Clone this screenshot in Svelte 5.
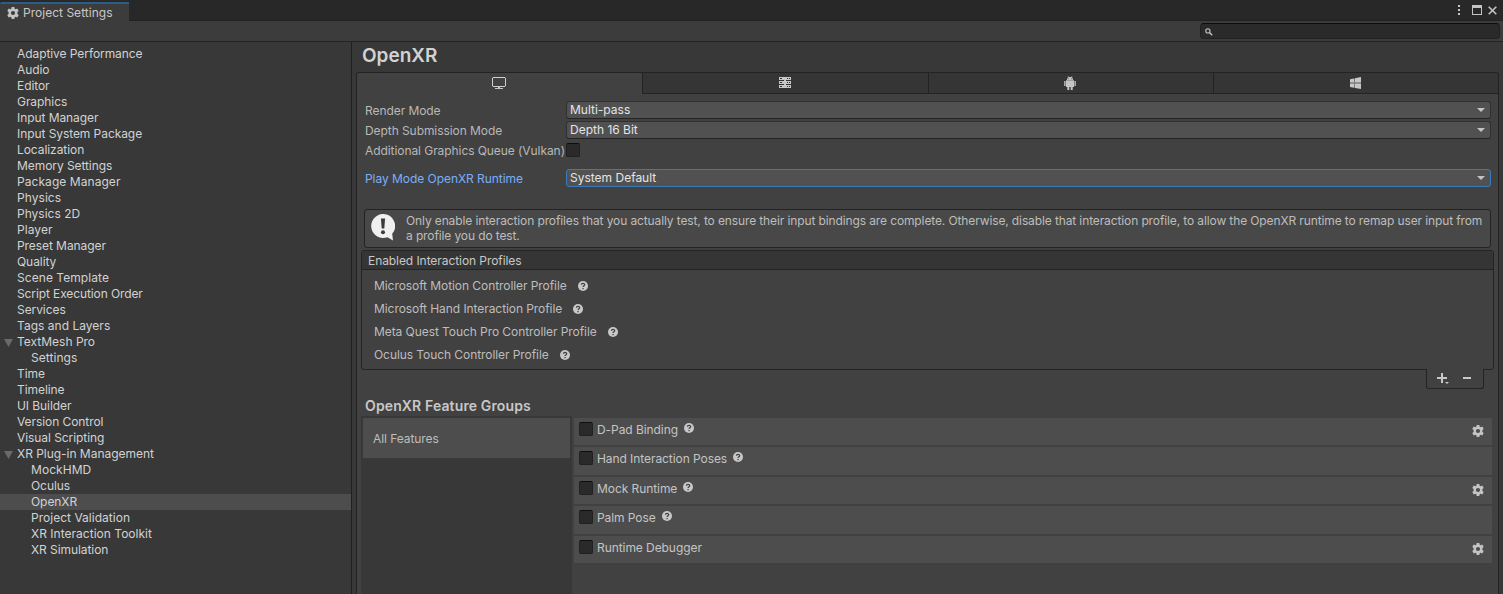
<script>
  const tree = [
    ['Adaptive Performance'], ['Audio'], ['Editor'], ['Graphics'], ['Input Manager'],
    ['Input System Package'], ['Localization'], ['Memory Settings'], ['Package Manager', '', 0.06],
    ['Physics', '', 0.06], ['Physics 2D', '', 0], ['Player', '', 0.06], ['Preset Manager'], ['Quality'],
    ['Scene Template', '', 0.06], ['Script Execution Order', '', -0.11], ['Services'], ['Tags and Layers', '', 0.02],
    ['TextMesh Pro', 'open', 0], ['Settings', 'child', 0.05], ['Time'], ['Timeline'], ['UI Builder'],
    ['Version Control'], ['Visual Scripting'], ['XR Plug-in Management', 'open', -0.03],
    ['MockHMD', 'child', 0.06], ['Oculus', 'child'], ['OpenXR', 'child'],
    ['Project Validation', 'child', 0.02], ['XR Interaction Toolkit', 'child', 0.02], ['XR Simulation', 'child']
  ];
  const profiles = [
    'Microsoft Motion Controller Profile',
    'Microsoft Hand Interaction Profile',
    'Meta Quest Touch Pro Controller Profile',
    'Oculus Touch Controller Profile'
  ];
  const features = [
    { name: 'D-Pad Binding', help: true, gear: true },
    { name: 'Hand Interaction Poses', help: true },
    { name: 'Mock Runtime', help: true, gear: true },
    { name: 'Palm Pose', help: true },
    { name: 'Runtime Debugger', gear: true }
  ];
  let selected = $state('OpenXR');
</script>

{#snippet gear(size)}
  <svg width={size} height={size} viewBox="0 0 12 12" fill="#c4c4c4">
    <path fill-rule="evenodd" d="M4.7 0h2.6l.4 1.7 .8.5 1.8-.6 1.4 2.3-1.3 1.2v1.8l1.3 1.2-1.4 2.3-1.8-.6-.8.5-.4 1.7H4.7l-.4-1.7-.8-.5-1.8.6L.3 8.1l1.3-1.2V5.1L.3 3.9l1.4-2.3 1.8.6.8-.5zM6 3.9a2.1 2.1 0 1 0 0 4.2 2.1 2.1 0 0 0 0-4.2z" />
  </svg>
{/snippet}

{#snippet help()}
  <svg class="help" width="10" height="10" viewBox="0 0 10 10">
    <circle cx="5" cy="5" r="5" fill="#c8c8c8" />
    <path d="M3.4 3.8C3.4 2 6.7 2 6.7 3.7 6.7 4.8 5.1 4.7 5.1 6.1" fill="none" stroke="#404040" stroke-width="1.25" />
    <rect x="4.4" y="7" width="1.3" height="1.2" fill="#404040" />
  </svg>
{/snippet}

{#snippet dropdown(value, focused)}
  <div class="dropdown" class:focused>
    <span>{value}</span>
    <svg width="8" height="4" viewBox="0 0 8 4"><path d="M0 0h8L4 4z" fill="#c4c4c4" /></svg>
  </div>
{/snippet}

<div class="window">
  <header class="titlebar">
    <div class="wintab">{@render gear(12)}<span>Project Settings</span></div>
    <div class="controls">
      <svg width="2" height="10" viewBox="0 0 2 10" fill="#c4c4c4"><path d="M0 0h2v2H0zM0 4h2v2H0zM0 8h2v2H0z" /></svg>
      <svg class="max" width="10" height="10" viewBox="0 0 10 10"><path fill="#c4c4c4" fill-rule="evenodd" d="M0 0h10v10H0zM1 3v6h8V3z" /></svg>
      <svg width="9" height="9" viewBox="0 0 9 9"><path d="M.7.7l7.6 7.6M8.3.7L.7 8.3" stroke="#c4c4c4" stroke-width="1.6" /></svg>
    </div>
  </header>

  <div class="toolbar">
    <div class="search">
      <svg width="8" height="8" viewBox="0 0 8 8" fill="none" stroke="#c4c4c4"><circle cx="2.9" cy="2.9" r="2.1" stroke-width="1.1" /><path d="M4.5 4.5l2.7 2.7" stroke-width="1.4" /></svg>
    </div>
  </div>

  <div class="body">
    <nav class="sidebar">
      {#each tree as [name, kind, tracking = -0.07]}
        <!-- svelte-ignore a11y_click_events_have_key_events, a11y_no_static_element_interactions -->
        <div class="item" class:child={kind === 'child'} class:selected={selected === name} onclick={() => (selected = name)}>
          {#if kind === 'open'}<svg class="fold" width="9" height="8" viewBox="0 0 9 8"><path d="M0 0h9L4.5 8z" fill="#6a6a6a" /></svg>{/if}
          <span style:letter-spacing="{tracking}px">{name}</span>
        </div>
      {/each}
    </nav>

    <main>
      <h1>OpenXR</h1>
      <section class="panel">
        <div class="tabs">
          <div class="tab active">
            <svg width="14" height="12" viewBox="0 0 14 12"><path d="M1 .5h12l.5.5v8l-.5.5H1L.5 9V1z" fill="none" stroke="#d0d0d0" /><path d="M6 9.5h2V11h3v1H3v-1h3z" fill="#c4c4c4" /></svg>
          </div>
          <div class="tab server">
            <svg width="12" height="11" viewBox="0 0 12 11" shape-rendering="crispEdges"><path d="M0 0h12v11H0z" fill="#c8c8c8" /><path d="M1 1h2v1H1zM8 1h1v1H8zM10 1h1v1h-1zM1 5h2v1H1zM8 5h1v1H8zM10 5h1v1h-1zM1 9h2v1H1zM8 9h1v1H8zM10 9h1v1h-1zM0 3h5v1H0zM7 3h5v1H7zM0 7h5v1H0zM7 7h5v1H7z" fill="#353535" /></svg>
          </div>
          <div class="tab android">
            <svg width="12" height="14" viewBox="0 0 12 14" fill="#c4c4c4"><path d="M3 4C3 2.7 3.5 1.8 4.2 1.3L3.5.2 4 0l.7 1h2.6L8 0l.5.2-.7 1.1C8.5 1.8 9 2.7 9 4z" /><path d="M2 4h8V11H8.700v3H6.700v-3H5.300v3H3.300v-3H2z" /><path d="M0 5h1.700v5H0zM10.300 5H12v5h-1.700z" opacity=".8" /><path d="M4 2.300h1v1H4zM7 2.300h1v1H7zM2 4h8v.6H2z" fill="#777" /></svg>
          </div>
          <div class="tab">
            <svg width="12" height="12" viewBox="0 0 12 12" fill="#c8c8c8"><path d="M0 2.200L4 1.500v4H0zM5 1.300L11 0v5.500H5zM0 6.500H4v4.200L0 10zM5 6.500h6V12L5 10.900z" /><path d="M0 5.500h11v1H0zM4 1.500h1v9.300H4z" opacity=".5" /></svg>
          </div>
        </div>

        <div class="fields">
          <div class="field"><label>Render Mode</label>{@render dropdown('Multi-pass', false)}</div>
          <div class="field"><label>Depth Submission Mode</label>{@render dropdown('Depth 16 Bit', false)}</div>
          <div class="field"><label>Additional Graphics Queue (Vulkan)</label><i class="check"></i></div>
          <div class="field gap"><label class="blue">Play Mode OpenXR Runtime</label>{@render dropdown('System Default', true)}</div>
        </div>

        <div class="notice">
          <svg width="24" height="27" viewBox="0 0 24 27"><path d="M12 0a12 12 0 1 0 4.500 23.200L22 26.500 21.200 19.800A12 12 0 0 0 12 0z" fill="#f0f0f0" /><path d="M9.900 4.500h4.200l-.8 10h-2.600z" fill="#3c3c3c" /><circle cx="12" cy="18.300" r="2" fill="#3c3c3c" /></svg>
          <p>Only enable interaction profiles that you actually test, to ensure their input bindings are complete. Otherwise, disable that interaction profile, to allow the OpenXR runtime to remap user input from<br />a profile you do test.</p>
        </div>

        <div class="list">
          <div class="listhead">Enabled Interaction Profiles</div>
          {#each profiles as p}
            <div class="profile"><span>{p}</span>{@render help()}</div>
          {/each}
        </div>
        <div class="listfoot">
          <svg width="13" height="12" viewBox="0 0 13 12" fill="#c8c8c8"><path d="M4 0h2v4h4v2H6v4H4V6H0V4h4zM8 9h4l-2 2z" /></svg>
          <svg class="minus" width="8" height="2" viewBox="0 0 8 2"><path d="M0 0h8v2H0z" fill="#c8c8c8" /></svg>
        </div>

        <h2>OpenXR Feature Groups</h2>
        <div class="groups">
          <aside><div class="group">All Features</div></aside>
          <div class="features">
            {#each features as f}
              <div class="feature">
                <i class="check"></i>
                <span>{f.name}</span>
                {#if f.help}{@render help()}{/if}
                {#if f.gear}<div class="cog">{@render gear(12)}</div>{/if}
              </div>
            {/each}
          </div>
        </div>
      </section>
    </main>
  </div>
</div>

<style>
  :global(body) { margin: 0; overflow: hidden; background: #383838; }
  .window {
    height: 594px; width: 1503px; overflow: hidden; box-sizing: border-box;
    display: flex; flex-direction: column;
    font: 12px/16px Inter, sans-serif; letter-spacing: -0.07px; color: #c8c8c8; background: #383838;
  }
  .window * { box-sizing: border-box; }
  svg { display: block; flex: none; }
  span { white-space: nowrap; }
  .titlebar { height: 21px; flex: none; display: flex; justify-content: space-between; background: #282828; box-shadow: inset 0 -1px #212121; }
  .wintab {
    width: 129px; margin-top: 2px; height: 19px; border-top: 2px solid #2c5d87; border-radius: 2px 0 0 0; letter-spacing: 0.02px;
    background: #3c3c3c; display: flex; align-items: center; gap: 4px; padding: 1px 0 0 7px;
  }
  .controls { display: flex; align-items: center; gap: 6px; padding: 0 6px 1px 0; }
  .max { margin-left: 6px; }
  .toolbar { height: 21px; flex: none; background: #3c3c3c; border-bottom: 1px solid #232323; display: flex; justify-content: flex-end; padding: 2px 3px 0 0; }
  .search { width: 300px; height: 16px; border: 1px solid #212121; border-top-color: #0d0d0d; border-radius: 4px; background: #2a2a2a; padding: 4px 0 0 4px; }
  .body { flex: 1; display: flex; min-height: 0; }
  .sidebar { width: 352px; flex: none; border-right: 1px solid #202020; padding-top: 4px; }
  .item { height: 16px; display: flex; align-items: center; padding-left: 17px; color: #d2d2d2; }
  .item.child { padding-left: 31px; }
  .item.selected { background: #4d4d4d; }
  .fold { margin: 1px 4px 0 -13px; }
  main { flex: 1; min-width: 0; padding: 0 4px 0 4px; display: flex; flex-direction: column; }
  h1 { margin: 0; height: 30px; padding: 2px 0 0 6px; font-size: 19px; line-height: 24px; font-weight: 600; letter-spacing: 0; color: #d2d2d2; }
  .panel { flex: 1; border: 1px solid #232323; border-bottom: 0; border-radius: 3px 3px 0 0; background: #414141; overflow: hidden; min-height: 0; }
  .tabs { display: grid; grid-template-columns: 285px 286px 285px 1fr; height: 21px; }
  .tab { display: flex; align-items: center; justify-content: center; background: #353535; border-left: 1px solid #232323; border-bottom: 1px solid #232323; }
  .tab.active { background: #414141; border: 0; padding: 0 1px 1px 0; }
  .tab.server { padding: 0 1px 1px 0; }
  .tab.android { padding-right: 2px; }
  .fields { padding: 7px 7px 0 8px; }
  .field { height: 20px; display: flex; align-items: flex-start; }
  .field.gap { margin-top: 8px; }
  label { width: 201px; flex: none; padding-top: 2px; white-space: nowrap; color: #b8b8b8; }
  .blue { color: #7baefa; letter-spacing: -0.05px; }
  .dropdown {
    flex: 1; height: 18px; border: 1px solid #303030; border-bottom-color: #242424; border-radius: 3px; background: #515151; letter-spacing: 0;
    display: flex; align-items: center; justify-content: space-between; padding: 0 5px 0 3px; color: #e4e4e4;
  }
  .dropdown.focused { border-color: #3a79bb; }
  .check { width: 14px; height: 14px; flex: none; margin-top: 2px; border: 1px solid #212121; border-top-color: #0d0d0d; border-radius: 2px; background: #2a2a2a; }
  .notice {
    margin: 20px 7px 0 7px; height: 39px; border: 1px solid #232323; border-radius: 3px; background: #484848;
    display: flex; gap: 11px; padding: 4px 0 0 6px;
  }
  .notice p { margin: -1px 0 0; line-height: 15px; letter-spacing: -0.116px; white-space: nowrap; color: #bdbdbd; }
  .list { margin: 2px 4px 0 4px; height: 120px; border: 1px solid #242424; border-radius: 3px; }
  .listhead { height: 19px; background: #353535; border-bottom: 1px solid #242424; padding: 2px 0 0 6px; margin-bottom: 4px; }
  .profile { height: 23px; display: flex; align-items: center; gap: 11px; padding-left: 12px; color: #bdbdbd; }
  .listfoot {
    width: 58px; height: 20px; margin: -1px 14px 0 auto; position: relative; background: #414141;
    border: 1px solid #242424; border-top: 0; border-radius: 0 0 3px 3px; display: flex; align-items: center; gap: 13px; padding: 0 0 0 10px;
  }
  .minus { margin-bottom: 2px; }
  h2 { margin: 8px 0 0 8px; font-size: 14px; line-height: 18px; font-weight: 600; height: 19px; letter-spacing: 0.13px; }
  .groups { display: flex; height: 190px; padding: 0 6px 0 4px; }
  aside { width: 211px; flex: none; background: #383838; padding: 2px; }
  .group { height: 40px; background: #4d4d4d; padding: 13px 0 0 10px; color: #bdbdbd; }
  .features { flex: 1; padding: 2px 0 0 2px; display: grid; grid-template-rows: 27px 28px 27px 28px 27px; row-gap: 2px; align-content: start; }
  .feature { background: #4d4d4d; display: flex; align-items: flex-start; padding-left: 5px; color: #c4c4c4; }
  .feature .check { margin: 4px 4px 0 0; }
  .feature span { margin: 4px 6px 0 0; }
  .feature .help { margin-top: 5px; }
  .cog { margin: 7px 8px 0 auto; }
</style>
